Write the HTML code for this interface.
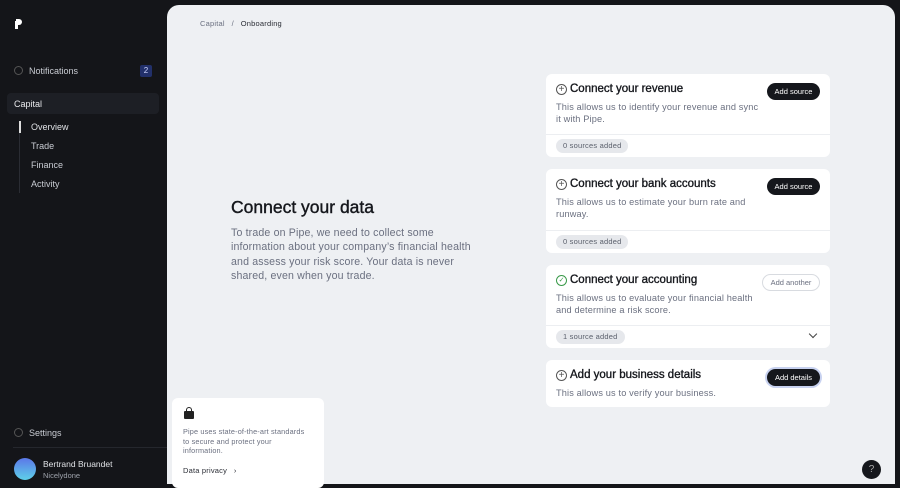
<!DOCTYPE html>
<html><head><style>
*{box-sizing:border-box;margin:0;padding:0}
body{width:900px;height:484px;background:#141519;font-family:"Liberation Sans",sans-serif;position:relative;overflow:hidden}
.a{position:absolute}
.side{color:#c9ccd3;font-size:9px}
.main{left:167px;top:5px;width:728px;height:479px;background:#eef0f3;border-radius:12px 12px 0 0}
.card{position:absolute;left:546px;width:284px;background:#fff;border-radius:6px}
.card h3{position:absolute;left:24px;top:9px;font-size:11.5px;font-weight:normal;color:#15171c;-webkit-text-stroke:0.35px #15171c}
.ic{position:absolute;left:10px;top:10px;width:11px;height:11px;border:1px solid #555;border-radius:50%;font-size:10px;line-height:9px;text-align:center;color:#555}
.card p{position:absolute;left:10px;top:27px;width:230px;white-space:nowrap;font-size:9.2px;line-height:12px;color:#6b7080;letter-spacing:0.15px}
.btn{position:absolute;right:10px;top:9px;height:17px;width:53px;border-radius:9px;background:#15171c;color:#fff;font-size:7.5px;line-height:17px;text-align:center}
.foot{position:absolute;left:0;right:0;bottom:0;height:23px;border-top:1px solid #eceef1}
.pill{position:absolute;left:10px;top:4px;height:14px;padding:0 7px;border-radius:7px;background:#e6e8ec;color:#5b606c;font-size:7.5px;line-height:14px;letter-spacing:0.2px}
</style></head><body>
<div class="a" style="left:15px;top:19px;width:8px;height:10px">
<div class="a" style="left:0;top:2px;width:3px;height:8px;background:#fff"></div>
<div class="a" style="left:1px;top:0;width:6px;height:6px;background:#fff;border-radius:0 3px 3px 0"></div></div>
<div class="a side" style="left:14px;top:66px;width:9px;height:9px;border:1px solid #555;border-radius:50%"></div>
<div class="a side" style="left:29px;top:66px">Notifications</div>
<div class="a" style="left:140px;top:65px;width:12px;height:12px;background:#22306a;color:#cfd6ff;font-size:8px;text-align:center;line-height:12px;border-radius:2px">2</div>
<div class="a" style="left:7px;top:93px;width:152px;height:21px;background:#1d1f25;border-radius:4px"></div>
<div class="a side" style="left:14px;top:99px;color:#e8e9ec">Capital</div>
<div class="a" style="left:19px;top:121px;width:1px;height:72px;background:#2a2c33"></div>
<div class="a" style="left:19px;top:121px;width:1.5px;height:12px;background:#ddd"></div>
<div class="a side" style="left:31px;top:122px;color:#e0e2e6">Overview</div>
<div class="a side" style="left:31px;top:141px">Trade</div>
<div class="a side" style="left:31px;top:160px">Finance</div>
<div class="a side" style="left:31px;top:179px">Activity</div>
<div class="a side" style="left:14px;top:428px;width:9px;height:9px;border:1px solid #555;border-radius:50%"></div>
<div class="a side" style="left:29px;top:428px">Settings</div>
<div class="a" style="left:13px;top:447px;width:154px;height:1px;background:#25272d"></div>
<div class="a" style="left:14px;top:458px;width:22px;height:22px;border-radius:50%;background:linear-gradient(#5b77e8,#5ed0e8)"></div>
<div class="a side" style="left:43px;top:459px;font-size:8.5px;color:#e0e2e6">Bertrand Bruandet</div>
<div class="a side" style="left:43px;top:471px;font-size:7.5px;color:#9ea2ab">Nicelydone</div>

<div class="a main"></div>
<div class="a" style="left:200px;top:19px;font-size:7.5px;color:#6b7080;letter-spacing:0.2px">Capital &nbsp;&nbsp;/&nbsp;&nbsp; <span style="color:#2a2d35">Onboarding</span></div>
<div class="a" style="left:231px;top:197px;font-size:17.5px;color:#15171c;-webkit-text-stroke:0.4px #15171c">Connect your data</div>
<div class="a" style="left:231px;top:226px;width:250px;font-size:10.6px;line-height:14.3px;color:#6b7080;letter-spacing:0.15px">To trade on Pipe, we need to collect some information about your company’s financial health and assess your risk score. Your data is never shared, even when you trade.</div>

<div class="a" style="left:172px;top:398px;width:152px;height:90px;background:#fff;border-radius:6px">
<div class="a" style="left:12px;top:13px;width:10px;height:8px;background:#222;border-radius:1px"></div>
<div class="a" style="left:14px;top:9px;width:6px;height:6px;border:1.5px solid #222;border-radius:3px 3px 0 0;border-bottom:none"></div>
<div class="a" style="left:11px;top:29px;white-space:nowrap;font-size:7.3px;line-height:9.5px;color:#6b7080;letter-spacing:0.15px">Pipe uses state-of-the-art standards<br>to secure and protect your<br>information.</div>
<div class="a" style="left:11px;top:68px;font-size:7.5px;color:#2a2d35;letter-spacing:0.2px">Data privacy &nbsp;&nbsp;›</div>
</div>

<div class="card" style="top:74px;height:83px"><div class="ic">+</div><h3>Connect your revenue</h3><div class="btn">Add source</div>
<p>This allows us to identify your revenue and sync<br>it with Pipe.</p><div class="foot"><div class="pill">0 sources added</div></div></div>
<div class="card" style="top:169px;height:84px"><div class="ic">+</div><h3>Connect your bank accounts</h3><div class="btn">Add source</div>
<p>This allows us to estimate your burn rate and<br>runway.</p><div class="foot"><div class="pill">0 sources added</div></div></div>
<div class="card" style="top:265px;height:83px"><div class="ic" style="border-color:#3a9a4a;color:#3a9a4a;font-size:7px">✓</div><h3>Connect your accounting</h3><div class="btn" style="background:#fff;color:#6b7080;border:1px solid #d8dbe0;width:58px;line-height:15px">Add another</div>
<p>This allows us to evaluate your financial health<br>and determine a risk score.</p><div class="foot"><div class="pill">1 source added</div><div class="a" style="right:14px;top:5px;width:6px;height:6px;border-right:1px solid #444;border-bottom:1px solid #444;transform:rotate(45deg)"></div></div></div>
<div class="card" style="top:360px;height:47px"><div class="ic">+</div><h3>Add your business details</h3><div class="btn" style="box-shadow:0 0 0 2px #c8d2f0">Add details</div>
<p>This allows us to verify your business.</p></div>

<div class="a" style="left:862px;top:460px;width:19px;height:19px;border-radius:50%;background:#15171c;color:#aaa;font-size:10px;text-align:center;line-height:19px">?</div>
</body></html>
